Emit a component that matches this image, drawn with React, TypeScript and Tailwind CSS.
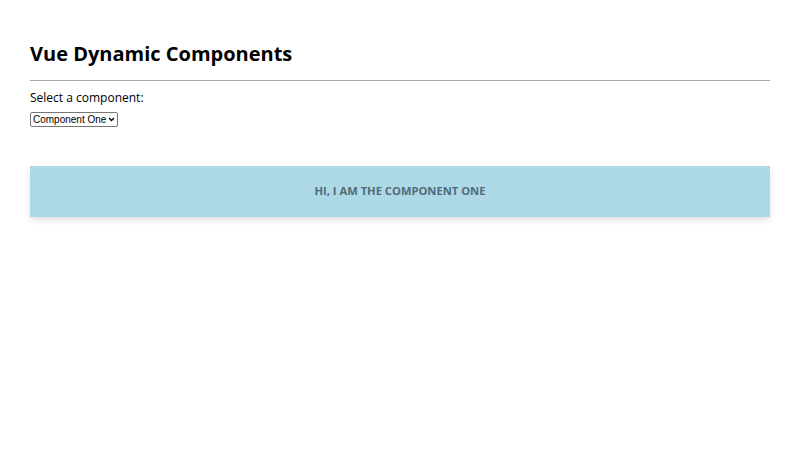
import React, { useState } from 'react';

const components: Record<string, string> = {
    one: 'Hi, I am the component one',
    two: 'Hi, I am the component two',
    three: 'Hi, I am the component three',
};

export default function App() {
    const [current, setCurrent] = useState('one');

    return (
        <div className="min-h-[450px] bg-white px-[30px] pt-[39px] font-['Open_Sans',sans-serif] text-black">
            <h1 className="text-[20px] font-bold leading-[30px]">Vue Dynamic Components</h1>
            <hr className="mt-[11px] border-t border-[#a8a8a8]" />
            <p className="mt-[8px] text-[12px] leading-[18px]">Select a component:</p>

            {/* native select, drawn chevron so the width matches */}
            <div className="relative mt-[5px] flex w-fit">
                <select
                    value={current}
                    onChange={(e) => setCurrent(e.target.value)}
                    className="block h-[15px] w-[88px] appearance-none rounded-[2px] border border-[#767676] bg-white pl-[2px] pr-[6px] font-['Liberation_Sans',sans-serif] text-[10px] leading-[13px] text-black"
                >
                    <option value="one">Component One</option>
                    <option value="two">Component Two</option>
                    <option value="three">Component Three</option>
                </select>
                <svg className="pointer-events-none absolute right-[3px] top-[5px] h-[5px] w-[7px]" viewBox="0 0 7 5" fill="none">
                    <path d="M1 1l2.5 2.5L6 1" stroke="#000" strokeWidth="1.4" />
                </svg>
            </div>

            <div className="mt-[39px] flex h-[51px] items-center justify-center bg-[#add8e6] shadow-[0_3px_6px_rgba(0,0,0,0.12)]">
                <span className="text-[11.2px] font-bold uppercase text-[#4f6b78]">{components[current]}</span>
            </div>
        </div>
    );
}
